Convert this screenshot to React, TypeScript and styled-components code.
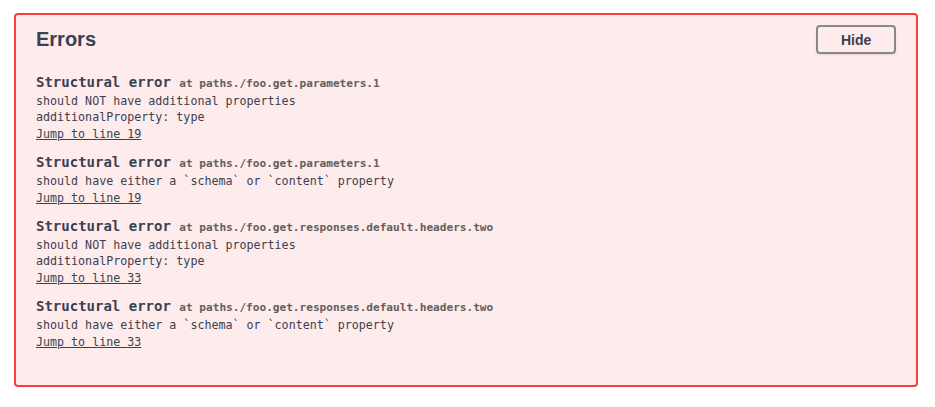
import React from "react";
import styled, { createGlobalStyle } from "styled-components";

const Global = createGlobalStyle`
  html, body { margin: 0; padding: 0; background: #ffffff; }
  body { font-family: "Liberation Sans", Arial, sans-serif; color: #3b4151; }
`;

const Page = styled.div`
  padding: 13px 17px 20px 14px;
`;

const Wrapper = styled.section`
  width: 904px;
  height: 374px;
  box-sizing: border-box;
  border: 2px solid #f93e3e;
  border-radius: 4px;
  background: rgba(249, 62, 62, 0.1);
  padding: 10px 20px 0 20px;
  display: flex;
  flex-direction: column;
`;

const Header = styled.hgroup`
  display: flex;
  align-items: center;
  margin: 0 0 19px 0;
`;

const Title = styled.h4`
  flex: 2;
  margin: 0;
  font-family: "Liberation Sans", Arial, sans-serif;
  font-size: 20px;
  line-height: 25px;
  font-weight: 700;
  color: #3b4151;
`;

const HideButton = styled.button`
  box-sizing: border-box;
  width: 80px;
  height: 29px;
  padding: 0 23px;
  border: 2px solid #888888;
  border-radius: 4px;
  background: transparent;
  box-shadow: 0 1px 2px rgba(0, 0, 0, 0.1);
  font-family: "Liberation Sans", Arial, sans-serif;
  font-size: 14px;
  font-weight: 700;
  color: #3b4151;
  cursor: pointer;
`;

const ErrorList = styled.div`
  display: flex;
  flex-direction: column;
`;

const ErrorBlock = styled.div`
  margin-bottom: 11px;
  font-family: "DejaVu Sans Mono", monospace;
  color: #3b4151;
`;

const ErrorTitle = styled.h4`
  margin: 0;
  font-family: "DejaVu Sans Mono", monospace;
  font-size: 14px;
  font-weight: 700;
  line-height: 18px;
  color: #3b4151;
`;

const Path = styled.small`
  font-size: 11.1px;
  font-weight: 700;
  color: #606060;
`;

const Message = styled.div`
  font-size: 11.67px;
  line-height: 16px;
  white-space: pre-line;
  color: #3b4151;
`;

const JumpLink = styled.a`
  display: block;
  margin-top: 1px;
  font-size: 11.67px;
  line-height: 16px;
  text-decoration: underline;
  color: #3b4151;
  cursor: pointer;
`;

const errors = [
  {
    path: "paths./foo.get.parameters.1",
    message: "should NOT have additional properties\nadditionalProperty: type",
    line: 19,
  },
  {
    path: "paths./foo.get.parameters.1",
    message: "should have either a `schema` or `content` property",
    line: 19,
  },
  {
    path: "paths./foo.get.responses.default.headers.two",
    message: "should NOT have additional properties\nadditionalProperty: type",
    line: 33,
  },
  {
    path: "paths./foo.get.responses.default.headers.two",
    message: "should have either a `schema` or `content` property",
    line: 33,
  },
];

export default function App() {
  return (
    <>
      <Global />
      <Page>
        <Wrapper>
          <Header>
            <Title>Errors</Title>
            <HideButton>Hide</HideButton>
          </Header>
          <ErrorList>
            {errors.map((e, i) => (
              <ErrorBlock key={i}>
                <ErrorTitle>
                  Structural error <Path>at {e.path}</Path>
                </ErrorTitle>
                <Message>{e.message}</Message>
                <JumpLink>Jump to line {e.line}</JumpLink>
              </ErrorBlock>
            ))}
          </ErrorList>
        </Wrapper>
      </Page>
    </>
  );
}
